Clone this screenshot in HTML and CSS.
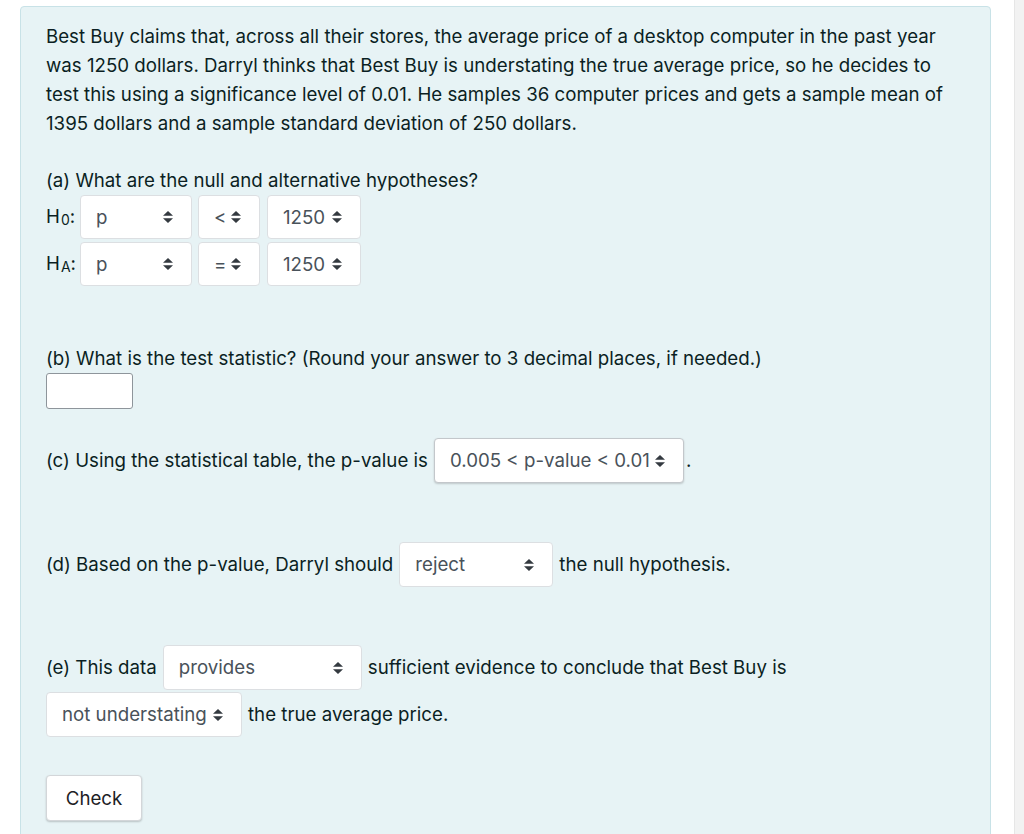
FILE: index.html
```html
<!DOCTYPE html>
<html lang="en">
<head>
<meta charset="utf-8">
<title>Question</title>
<link rel="stylesheet" href="styles.css">
</head>
<body>
<div class="page">
  <main class="formulation">
    <p class="intro">Best Buy claims that, across all their stores, the average price of a desktop computer in the past year was 1250 dollars. Darryl thinks that Best Buy is understating the true average price, so he decides to test this using a significance level of 0.01. He samples 36 computer prices and gets a sample mean of 1395 dollars and a sample standard deviation of 250 dollars.</p>

    <div class="part part-a">
      <p class="qline">(a) What are the null and alternative hypotheses?</p>
      <div class="hrow">
        <span class="hlabel">H<span class="sub">0</span>:</span>
        <div class="sel w-param"><span class="val">p</span><svg class="arr" viewBox="0 0 4 5" width="10" height="12" preserveAspectRatio="none"><path d="M2 0L0 2h4zm0 5L0 3h4z"/></svg></div>
        <div class="sel w-op"><span class="val">&lt;</span><svg class="arr" viewBox="0 0 4 5" width="10" height="12" preserveAspectRatio="none"><path d="M2 0L0 2h4zm0 5L0 3h4z"/></svg></div>
        <div class="sel w-num"><span class="val">1250</span><svg class="arr" viewBox="0 0 4 5" width="10" height="12" preserveAspectRatio="none"><path d="M2 0L0 2h4zm0 5L0 3h4z"/></svg></div>
      </div>
      <div class="hrow">
        <span class="hlabel">H<span class="sub">A</span>:</span>
        <div class="sel w-param"><span class="val">p</span><svg class="arr" viewBox="0 0 4 5" width="10" height="12" preserveAspectRatio="none"><path d="M2 0L0 2h4zm0 5L0 3h4z"/></svg></div>
        <div class="sel w-op"><span class="val">=</span><svg class="arr" viewBox="0 0 4 5" width="10" height="12" preserveAspectRatio="none"><path d="M2 0L0 2h4zm0 5L0 3h4z"/></svg></div>
        <div class="sel w-num"><span class="val">1250</span><svg class="arr" viewBox="0 0 4 5" width="10" height="12" preserveAspectRatio="none"><path d="M2 0L0 2h4zm0 5L0 3h4z"/></svg></div>
      </div>
    </div>

    <div class="part part-b">
      <p class="qline">(b) What is the test statistic? (Round your answer to 3 decimal places, if needed.)</p>
      <div class="answer"></div>
    </div>

    <div class="part part-c">
      <div class="line">
        <span>(c) Using the statistical table, the p-value is</span>
        <div class="sel sel-strong w-pval"><span class="val">0.005 &lt; p-value &lt; 0.01</span><svg class="arr" viewBox="0 0 4 5" width="10" height="12" preserveAspectRatio="none"><path d="M2 0L0 2h4zm0 5L0 3h4z"/></svg></div>
        <span class="dot">.</span>
      </div>
    </div>

    <div class="part part-d">
      <div class="line">
        <span>(d) Based on the p-value, Darryl should</span>
        <div class="sel w-reject"><span class="val">reject</span><svg class="arr" viewBox="0 0 4 5" width="10" height="12" preserveAspectRatio="none"><path d="M2 0L0 2h4zm0 5L0 3h4z"/></svg></div>
        <span>the null hypothesis.</span>
      </div>
    </div>

    <div class="part part-e">
      <div class="line">
        <span>(e) This data</span>
        <div class="sel w-provides"><span class="val">provides</span><svg class="arr" viewBox="0 0 4 5" width="10" height="12" preserveAspectRatio="none"><path d="M2 0L0 2h4zm0 5L0 3h4z"/></svg></div>
        <span>sufficient evidence to conclude that Best Buy is</span>
      </div>
      <div class="line line-2">
        <div class="sel w-under"><span class="val">not understating</span><svg class="arr" viewBox="0 0 4 5" width="10" height="12" preserveAspectRatio="none"><path d="M2 0L0 2h4zm0 5L0 3h4z"/></svg></div>
        <span>the true average price.</span>
      </div>
    </div>

    <div class="actions">
      <button class="check" type="button">Check</button>
    </div>
  </main>
  <div class="scrollstrip"></div>
</div>
</body>
</html>
```

FILE: styles.css
```css
* { box-sizing: border-box; }

html, body {
  margin: 0;
  padding: 0;
  background: #ffffff;
}

body {
  font-family: Inter, "Liberation Sans", Arial, sans-serif;
  font-size: 18.7px;
  line-height: 29px;
  color: #0b1f23;
  height: 834px;
  overflow: hidden;
}

.page {
  display: flex;
  align-items: flex-start;
  height: 834px;
  padding: 6px 0 0 20px;
}

.formulation {
  width: 971px;
  min-height: 900px;
  background: #e7f3f5;
  border: 1px solid #c8e2e7;
  border-radius: 4px;
  padding: 15px 25px 20px 25px;
}

.scrollstrip {
  margin-left: auto;
  width: 10px;
  height: 834px;
  margin-top: -6px;
  background: #f2f2f2;
  border-left: 1px solid #e6e6e6;
}

p { margin: 0; }

.intro { margin-bottom: 28px; }

.qline { margin: 0; }

.hrow {
  display: flex;
  align-items: center;
  height: 44px;
  margin-bottom: 3px;
}

.hlabel {
  width: 34px;
  flex: none;
}

.sub {
  font-size: 14px;
  position: relative;
  top: 2px;
  margin-left: 1px;
}

.sel {
  position: relative;
  flex: none;
  height: 44px;
  display: flex;
  align-items: center;
  background: #ffffff;
  border: 1px solid #dcdfe2;
  border-radius: 4px;
  padding: 0 34px 0 15px;
  color: #49525a;
  white-space: nowrap;
}

.sel .arr {
  position: absolute;
  right: 18px;
  top: 50%;
  margin-top: -6px;
  fill: #343a40;
}

.hrow .sel { margin-right: 6px; }

.w-param { width: 112px; }
.w-op { width: 62px; }
.w-num { width: 94px; }
.hrow .w-op { margin-right: 7px; }

.w-pval { width: 250px; height: 45px; }
.w-reject { width: 154px; height: 45px; }
.w-provides { width: 199px; height: 45px; }
.w-under { width: 196px; height: 45px; }

.sel-strong {
  border-color: #c3c7cb;
  box-shadow: 0 1px 2px rgba(0, 0, 0, 0.18);
}

.part-b { margin-top: 58px; }

.answer {
  width: 87px;
  height: 36px;
  background: #ffffff;
  border: 1px solid #8e959b;
  border-radius: 3px;
}

.line {
  display: flex;
  align-items: center;
  height: 45px;
  white-space: nowrap;
}

.line .sel { margin: 0 6px; }
.line .sel:first-child { margin-left: 0; }

.dot { margin-left: -4px; }

.part-c { margin-top: 29px; }
.part-d { margin-top: 59px; }
.part-e { margin-top: 58px; }
.line-2 { margin-top: 2px; }

.actions { margin-top: 38px; }

.check {
  font-family: inherit;
  font-size: 18.7px;
  color: #1d2125;
  width: 96px;
  height: 46px;
  background: #ffffff;
  border: 1px solid #d3d6d9;
  border-radius: 4px;
  box-shadow: 0 1px 2px rgba(0, 0, 0, 0.2);
  padding: 0;
}
```
